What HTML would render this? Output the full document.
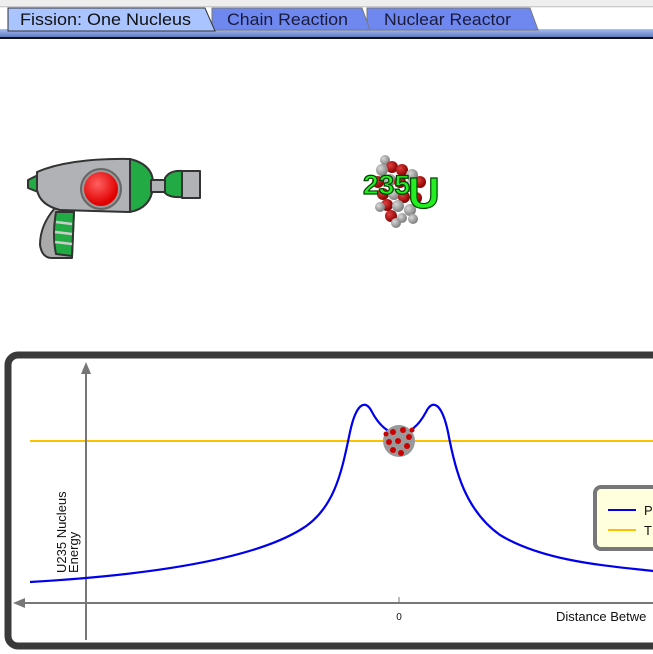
<!DOCTYPE html>
<html><head><style>
body{margin:0;width:653px;height:654px;overflow:hidden;background:#fff;font-family:"Liberation Sans",sans-serif;}
</style></head><body>
<svg width="653" height="654" xmlns="http://www.w3.org/2000/svg" style="position:absolute;left:0;top:0">
<defs>
<linearGradient id="strip" x1="0" y1="0" x2="0" y2="1"><stop offset="0" stop-color="#a8bff5"/><stop offset="1" stop-color="#5f7bbd"/></linearGradient>
<radialGradient id="rb" cx="0.4" cy="0.35" r="0.6"><stop offset="0" stop-color="#ff6060"/><stop offset="1" stop-color="#e00000"/></radialGradient>
<radialGradient id="rg" cx="0.35" cy="0.35" r="0.65"><stop offset="0" stop-color="#e04040"/><stop offset="1" stop-color="#8a0000"/></radialGradient>
<radialGradient id="gg" cx="0.35" cy="0.35" r="0.65"><stop offset="0" stop-color="#d8d8d8"/><stop offset="1" stop-color="#808080"/></radialGradient>
</defs>
<rect x="0" y="0" width="653" height="8" fill="#eeeeee"/>
<rect x="0" y="6" width="653" height="1" fill="#cccccc"/>
<rect x="0" y="29" width="653" height="8" fill="url(#strip)"/>
<rect x="0" y="37" width="653" height="2" fill="#111"/>
<path d="M367 30 L367 8 L530 8 L538 30 Z" fill="#6f88f0" stroke="#777" stroke-width="1"/>
<path d="M212 30 L212 8 L362 8 L370 30 Z" fill="#6f88f0" stroke="#777" stroke-width="1"/>
<path d="M8 31 L8 8 L205 8 L215 31 Z" fill="#a9c4ff" stroke="#333" stroke-width="1"/>
<text x="20" y="25" font-size="17" fill="#111" textLength="171" lengthAdjust="spacingAndGlyphs">Fission: One Nucleus</text>
<text x="227" y="25" font-size="17" fill="#1a1a3a" textLength="121" lengthAdjust="spacingAndGlyphs">Chain Reaction</text>
<text x="384" y="25" font-size="17" fill="#1a1a3a" textLength="127" lengthAdjust="spacingAndGlyphs">Nuclear Reactor</text>

<!-- gun -->
<g stroke="#333" stroke-width="2" stroke-linejoin="round">
<path d="M55 208 Q40 225 40 245 Q42 258 52 258 L72 258 L74 210 Z" fill="#aaa"/>
<path d="M56 212 L74 212 L72 256 L56 254 Q52 235 56 212 Z" fill="#22aa44"/>
<path d="M28 180 L38 175 L38 192 L28 188 Z" fill="#22aa44"/>
<path d="M37 172 Q70 158 130 159 L130 212 L60 210 Q40 205 37 190 Z" fill="#b0b2b5"/>
<path d="M130 159 Q155 165 153 187 Q151 208 130 212 Z" fill="#22aa44"/>
<rect x="151" y="180" width="14" height="12" fill="#b0b2b5"/>
<path d="M165 178 Q170 170 182 171 L182 197 Q170 198 165 193 Z" fill="#22aa44"/>
<path d="M182 171 L200 171 L200 198 L182 198 Z" fill="#b0b2b5"/>
</g>
<g stroke="#ccc" stroke-width="2.5"><line x1="56" y1="222" x2="72" y2="224"/><line x1="55" y1="232" x2="72" y2="234"/><line x1="55" y1="242" x2="72" y2="244"/></g>
<circle cx="101" cy="189" r="20" fill="#999" stroke="#666" stroke-width="2"/>
<circle cx="101" cy="189" r="17" fill="url(#rb)"/>

<!-- U235 nucleus -->
<g>
<circle cx="385" cy="160" r="5" fill="url(#gg)"/>
<circle cx="392" cy="167" r="6" fill="url(#rg)"/>
<circle cx="382" cy="170" r="6" fill="url(#gg)"/>
<circle cx="402" cy="170" r="6" fill="url(#rg)"/>
<circle cx="412" cy="175" r="6" fill="url(#gg)"/>
<circle cx="420" cy="182" r="6" fill="url(#rg)"/>
<circle cx="378" cy="182" r="6" fill="url(#rg)"/>
<circle cx="390" cy="180" r="6" fill="url(#gg)"/>
<circle cx="400" cy="182" r="6" fill="url(#rg)"/>
<circle cx="410" cy="186" r="6" fill="url(#gg)"/>
<circle cx="383" cy="194" r="6" fill="url(#rg)"/>
<circle cx="394" cy="194" r="6" fill="url(#gg)"/>
<circle cx="404" cy="197" r="6" fill="url(#rg)"/>
<circle cx="416" cy="198" r="6" fill="url(#rg)"/>
<circle cx="387" cy="205" r="6" fill="url(#rg)"/>
<circle cx="398" cy="206" r="6" fill="url(#gg)"/>
<circle cx="410" cy="210" r="6" fill="url(#gg)"/>
<circle cx="391" cy="216" r="6" fill="url(#rg)"/>
<circle cx="402" cy="218" r="5" fill="url(#gg)"/>
<circle cx="413" cy="219" r="5" fill="url(#gg)"/>
<circle cx="380" cy="207" r="5" fill="url(#gg)"/>
<circle cx="396" cy="223" r="5" fill="url(#gg)"/>
</g>
<text x="363" y="194" font-size="27" font-weight="bold" fill="#22ee22" stroke="#004400" stroke-width="1.2" textLength="47" lengthAdjust="spacingAndGlyphs">235</text>
<text x="408" y="208" font-size="44" font-weight="bold" fill="#22ee22" stroke="#004400" stroke-width="1.2">U</text>

<!-- chart panel -->
<rect x="8" y="355" width="680" height="291" rx="10" fill="#fff" stroke="#3a3a3a" stroke-width="7"/>
<line x1="30" y1="441" x2="653" y2="441" stroke="#ffc000" stroke-width="2"/>
<line x1="86" y1="372" x2="86" y2="640" stroke="#777" stroke-width="2"/>
<path d="M86 362 L81 374 L91 374 Z" fill="#777"/>
<line x1="22" y1="603" x2="653" y2="603" stroke="#777" stroke-width="2"/>
<path d="M13 603 L25 598 L25 608 Z" fill="#777"/>
<line x1="399" y1="597" x2="399" y2="603" stroke="#777" stroke-width="1"/>
<text x="399" y="620" font-size="10" text-anchor="middle" fill="#111">0</text>
<text x="556" y="621" font-size="13" fill="#111">Distance Betwe</text>
<text transform="translate(66,573) rotate(-90)" font-size="13" fill="#111">U235 Nucleus</text>
<text transform="translate(78,573) rotate(-90)" font-size="13" fill="#111">Energy</text>
<path d="M30 582 C150 575 250 560 300 530 C335 510 342 470 350 432 C356 404 365 398 372 412 C380 427 390 434 399 434 C408 434 418 427 426 412 C433 398 442 404 448 432 C455 470 465 510 500 535 C545 562 610 566 653 571" fill="none" stroke="#0000ee" stroke-width="2.2"/>
<g>
<circle cx="399" cy="441" r="16" fill="#999"/>
<circle cx="393" cy="432" r="3" fill="#c00"/><circle cx="403" cy="430" r="3" fill="#c00"/><circle cx="409" cy="437" r="3" fill="#c00"/>
<circle cx="389" cy="442" r="3" fill="#c00"/><circle cx="398" cy="441" r="3" fill="#c00"/><circle cx="407" cy="446" r="3" fill="#c00"/>
<circle cx="393" cy="450" r="3" fill="#c00"/><circle cx="401" cy="453" r="3" fill="#c00"/><circle cx="386" cy="434" r="2.5" fill="#c00"/><circle cx="412" cy="430" r="2.5" fill="#c00"/>
</g>
<rect x="595" y="487" width="70" height="62" rx="6" fill="#ffffdd" stroke="#777" stroke-width="4"/>
<line x1="608" y1="510" x2="636" y2="510" stroke="#0000ee" stroke-width="2"/>
<line x1="608" y1="530" x2="636" y2="530" stroke="#ffc000" stroke-width="2"/>
<text x="644" y="515" font-size="13" fill="#111">P</text>
<text x="644" y="535" font-size="13" fill="#111">T</text>
</svg>
</body></html>
